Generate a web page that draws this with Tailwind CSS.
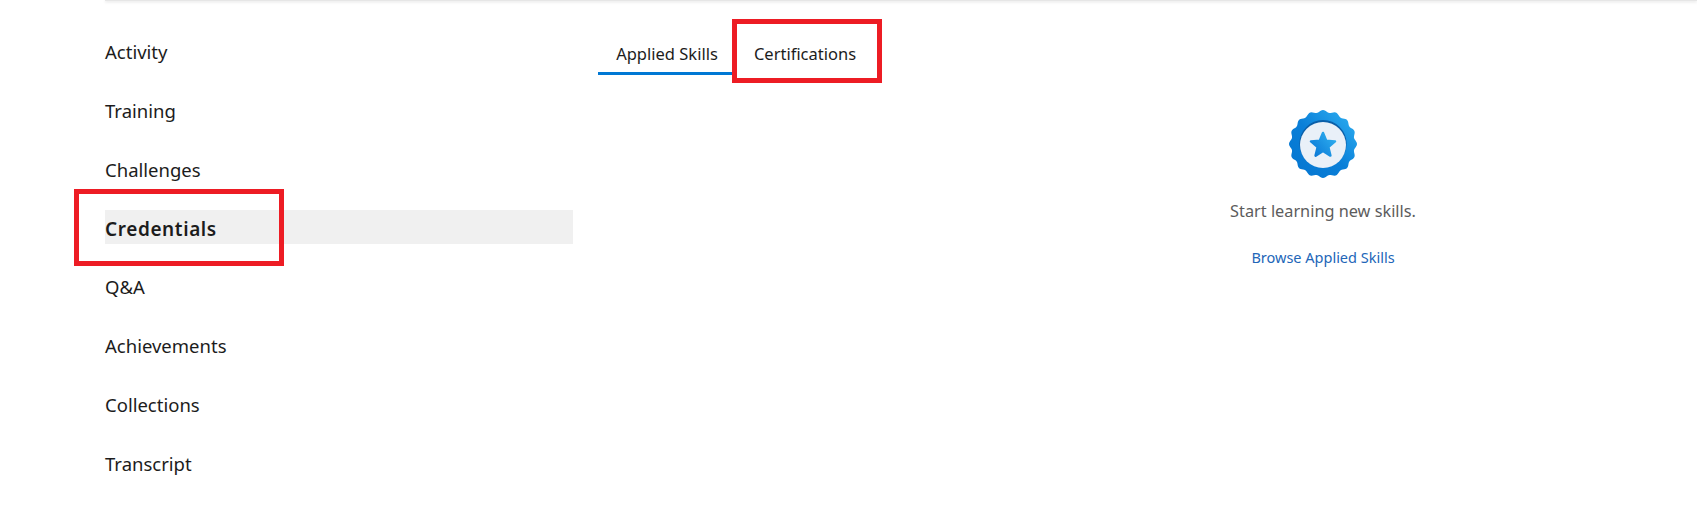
<!DOCTYPE html>
<html lang="en">
<head>
  <meta charset="UTF-8">
  <title>Credentials</title>
  <script src="https://cdn.jsdelivr.net/npm/@tailwindcss/browser@4"></script>
</head>
<body class="bg-white">
  <div class="relative h-[507px] w-full overflow-hidden font-['Noto_Sans','Open_Sans',sans-serif] text-[#1c1c1c]">
    <div class="ml-[105px] h-[1px] bg-[#e6e6e6] shadow-[0_1px_3px_rgba(0,0,0,0.18)]"></div>

    <div class="ml-[105px] mt-[33px] flex">
      <nav class="flex w-[468px] shrink-0 flex-col gap-[24.7px] text-[18.5px]">
        <a class="flex h-[34px] items-center pt-[2px]">Activity</a>
        <a class="flex h-[34px] items-center pt-[2px]">Training</a>
        <a class="flex h-[34px] items-center pt-[2px]">Challenges</a>
        <a class="flex h-[34px] items-center bg-[#f0f0f0] pt-[4px] text-[19px] font-semibold tracking-[0.6px]">Credentials</a>
        <a class="flex h-[34px] items-center pt-[2px]">Q&amp;A</a>
        <a class="flex h-[34px] items-center pt-[2px]">Achievements</a>
        <a class="flex h-[34px] items-center pt-[4px]">Collections</a>
        <a class="flex h-[34px] items-center pt-[4px]">Transcript</a>
      </nav>

      <main class="ml-[25px] w-[1450px] shrink-0">
        <div class="flex text-[16.5px]">
          <div class="flex h-[41px] w-[138px] items-start justify-center border-b-[3px] border-[#0078d4] pt-[8px]">Applied Skills</div>
          <div class="flex h-[41px] w-[138px] items-start justify-center pt-[8px]">Certifications</div>
        </div>
        <div class="mt-[34px] flex flex-col items-center">
          <svg class="h-[70px] w-[70px]" viewBox="0 0 70 70">
            <defs>
              <linearGradient id="rim" x1="0.9" y1="0.1" x2="0.15" y2="0.85">
                <stop offset="0" stop-color="#2aa9ee" />
                <stop offset="0.55" stop-color="#0a7fd8" />
                <stop offset="1" stop-color="#0678d2" />
              </linearGradient>
              <linearGradient id="star" x1="1" y1="0.1" x2="0" y2="0.9">
                <stop offset="0" stop-color="#2fb0f0" />
                <stop offset="1" stop-color="#0a78d6" />
              </linearGradient>
            </defs>
            <path id="scallop" fill="url(#rim)" d="" />
            <circle cx="35" cy="34.6" r="23.6" fill="#0b5fa8" />
            <circle cx="35" cy="36" r="23" fill="#e9f0f8" />
            <path fill="url(#star)" stroke="url(#star)" stroke-width="2.5" stroke-linejoin="round" d="M35 24 L38.2 31.8 L47 32.4 L40.3 38 L42.4 46.6 L35 42 L27.6 46.6 L29.7 38 L23 32.4 L31.8 31.8 Z" />
          </svg>
          <p class="mt-[20px] text-[16.3px] leading-[24px] text-[#5c5c5c]">Start learning new skills.</p>
          <a class="mt-[24px] text-[14.5px] leading-[20px] text-[#2266b8]">Browse Applied Skills</a>
        </div>
      </main>
    </div>

    <!-- red annotation boxes drawn over the page -->
    <div class="absolute left-[732px] top-[19px] h-[64px] w-[150px] border-[5px] border-[#ed1c24]"></div>
    <div class="absolute left-[74px] top-[189px] h-[77px] w-[210px] border-[5px] border-[#ed1c24]"></div>
  </div>

  <script>
    // wavy outer edge of the badge
    const pts = [];
    for (let i = 0; i < 180; i++) {
      const a = (i / 180) * Math.PI * 2;
      const r = 32.8 + 1.2 * Math.cos(a * 16);
      pts.push((35 + r * Math.sin(a)).toFixed(2) + " " + (35 - r * Math.cos(a)).toFixed(2));
    }
    document.getElementById("scallop").setAttribute("d", "M" + pts.join(" L") + " Z");
  </script>
</body>
</html>
